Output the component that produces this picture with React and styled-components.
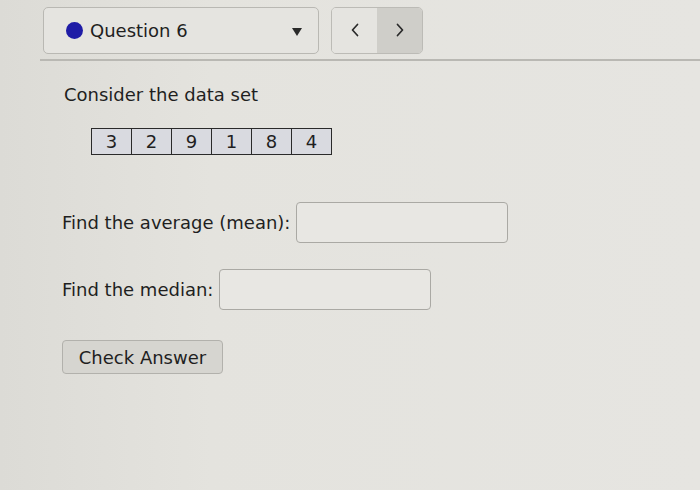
import React from 'react'
import styled, { createGlobalStyle } from 'styled-components'

const GlobalStyle = createGlobalStyle`
    html, body {
        margin: 0;
        padding: 0;
        background-color: #e3e2dd;
    }
    body {
        width: 700px;
        height: 490px;
        overflow: hidden;
        font-family: "DejaVu Sans", Verdana, sans-serif;
        color: #1f1f1f;
    }
`

const values = [3, 2, 9, 1, 8, 4]

const Chevron = ({ dir }) => (
    <svg width="10" height="14" viewBox="0 0 10 14">
        <path
            d={dir === 'left' ? 'M7.5 1.5 L2.5 7 L7.5 12.5' : 'M2.5 1.5 L7.5 7 L2.5 12.5'}
            fill="none"
            stroke="#2a2a2a"
            strokeWidth="1.7"
            strokeLinecap="round"
            strokeLinejoin="round"
        />
    </svg>
)

const App = () => {
    return (
        <Page>
            <GlobalStyle />
            <Header>
                <Selector>
                    <Dot />
                    <SelectorLabel>Question 6</SelectorLabel>
                    <Caret />
                </Selector>
                <NavGroup>
                    <NavButton><Chevron dir="left" /></NavButton>
                    <NavButton dark><Chevron dir="right" /></NavButton>
                </NavGroup>
            </Header>
            <Rule />
            <Content>
                <Title>Consider the data set</Title>
                <DataTable>
                    <tbody>
                        <tr>
                            {values.map((v, i) => <Cell key={i}>{v}</Cell>)}
                        </tr>
                    </tbody>
                </DataTable>
                <Row top={47}>
                    <Label>Find the average (mean):</Label>
                    <AnswerBox />
                </Row>
                <Row top={26}>
                    <Label>Find the median:</Label>
                    <AnswerBox />
                </Row>
                <CheckButton>Check Answer</CheckButton>
            </Content>
        </Page>
    )
}

const Page = styled.div`
    width: 700px;
    height: 490px;
    background: linear-gradient(90deg, #dcdbd6 0%, #e4e3de 30%, #e6e5e1 100%);
`

const Header = styled.div`
    display: flex;
    align-items: center;
    gap: 12px;
    padding: 7px 0 0 43px;
    height: 47px;
`

const Selector = styled.div`
    display: flex;
    align-items: center;
    box-sizing: border-box;
    width: 276px;
    height: 47px;
    padding: 0 16px 0 22px;
    border: 1.5px solid #b9b8b3;
    border-radius: 5px;
    background-color: #e5e4e0;
`

const Dot = styled.span`
    width: 17px;
    height: 17px;
    border-radius: 50%;
    background-color: #1f1ca6;
    flex-shrink: 0;
`

const SelectorLabel = styled.span`
    margin-left: 7px;
    font-size: 18px;
    flex: 1;
`

const Caret = styled.span`
    width: 0;
    height: 0;
    border-left: 5px solid transparent;
    border-right: 5px solid transparent;
    border-top: 8px solid #2a2a2a;
    margin-top: 3px;
`

const NavGroup = styled.div`
    display: flex;
    box-sizing: border-box;
    width: 92px;
    height: 47px;
    border: 1.5px solid #bcbbb6;
    border-radius: 5px;
    overflow: hidden;
`

const NavButton = styled.div`
    flex: 1;
    display: flex;
    align-items: center;
    justify-content: center;
    padding-bottom: 2px;
    background-color: ${props => props.dark ? '#cfcec9' : '#e5e4e0'};
`

const Rule = styled.div`
    margin: 5px 0 0 40px;
    height: 2px;
    background-color: #b9b8b3;
`

const Content = styled.div`
    display: flex;
    flex-direction: column;
    align-items: flex-start;
    padding-left: 62px;
`

const Title = styled.div`
    margin: 23px 0 0 2px;
    font-size: 18px;
    line-height: 22px;
`

const DataTable = styled.table`
    margin: 22px 0 0 29px;
    border-collapse: collapse;
    background-color: #d9dae0;
`

const Cell = styled.td`
    width: 39px;
    height: 25px;
    padding: 0;
    border: 1.5px solid #2a2a2a;
    text-align: center;
    font-size: 18px;
    line-height: 25px;
`

const Row = styled.div`
    display: flex;
    align-items: center;
    gap: 6px;
    margin-top: ${props => props.top}px;
`

const Label = styled.span`
    font-size: 18px;
`

const AnswerBox = styled.div`
    box-sizing: border-box;
    width: 212px;
    height: 41px;
    border: 1.5px solid #aaa9a4;
    border-radius: 4px;
    background-color: #e8e7e3;
`

const CheckButton = styled.button`
    margin-top: 30px;
    box-sizing: border-box;
    width: 161px;
    height: 34px;
    border: 1px solid #b2b1ac;
    border-radius: 4px;
    background-color: #d6d5d0;
    font-family: "DejaVu Sans", Verdana, sans-serif;
    font-size: 18px;
    color: #1f1f1f;
    padding: 0;
`

export default App
